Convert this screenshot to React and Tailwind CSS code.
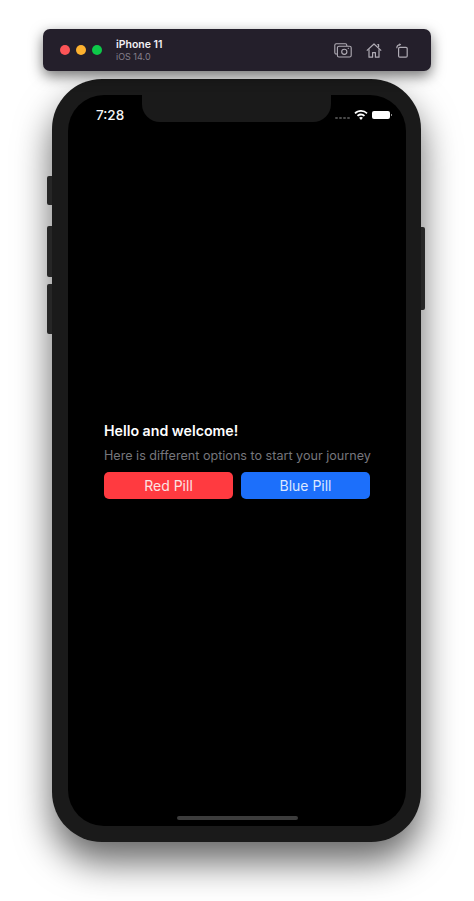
function CameraIcon() {
  return (
    <svg width="18" height="15" viewBox="0 0 18 15" fill="none" stroke="currentColor" strokeWidth="1.1">
      <path d="M3 11H2.2A1.4 1.4 0 0 1 .8 9.6V2.2A1.4 1.4 0 0 1 2.2.8h9.2a1.4 1.4 0 0 1 1.4 1.4V3" />
      <rect x="3.4" y="3.2" width="13.8" height="10.8" rx="1.6" />
      <circle cx="10.3" cy="8.8" r="2.6" />
      <path d="M13.8 5.4h1" />
    </svg>
  )
}

function HomeIcon() {
  return (
    <svg width="16" height="15" viewBox="0 0 16 15" fill="none" stroke="currentColor" strokeWidth="1.2" strokeLinejoin="round">
      <path d="M.8 7.6 8 1l7.2 6.6" />
      <path d="M3 6.2v8h3.6V9.6h2.8v4.6H13v-8" />
      <path d="M11.4 1.6h1.2v2.6" />
    </svg>
  )
}

function RotateIcon() {
  return (
    <svg width="12" height="15" viewBox="0 0 12 15" fill="none" stroke="currentColor" strokeWidth="1.2">
      <rect x="2.6" y="4.4" width="8.6" height="9.8" rx="1.2" />
      <path d="M.8 5.2C.8 3 2 1.8 4 1.6" />
      <path d="M3.4.2 5.2 1.6 3.4 3" fill="currentColor" stroke="none" />
    </svg>
  )
}

function WifiIcon() {
  return (
    <svg width="14" height="10" viewBox="0 0 14 10" fill="white">
      <path d="M7 0C4.4 0 2.1 1 .4 2.7l1.2 1.3A7.7 7.7 0 0 1 7 1.8c2.1 0 4 .8 5.4 2.2l1.2-1.3A9.6 9.6 0 0 0 7 0Z" />
      <path d="M7 3.6c-1.6 0-3 .6-4.1 1.7l1.2 1.3A4.2 4.2 0 0 1 7 5.4c1.1 0 2.2.5 2.9 1.2l1.2-1.3A5.8 5.8 0 0 0 7 3.6Z" />
      <path d="M7 7c-.8 0-1.4.3-1.9.8L7 10l1.9-2.2C8.4 7.3 7.8 7 7 7Z" />
    </svg>
  )
}

export default function App() {
  return (
    <div className="h-[901px] w-[474px] overflow-hidden bg-white pt-[29px] font-['Inter',sans-serif]">
      {/* simulator toolbar */}
      <div className="relative z-10 ml-[43px] flex h-[42px] w-[388px] items-center rounded-[7px] bg-[#241f2b] pl-[17px] pr-[23px] shadow-[0_5px_14px_rgba(0,0,0,0.55)]">
        <div className="flex gap-[6px]">
          <span className="h-[10px] w-[10px] rounded-full bg-[#fc5457]" />
          <span className="h-[10px] w-[10px] rounded-full bg-[#fdb12f]" />
          <span className="h-[10px] w-[10px] rounded-full bg-[#0dc949]" />
        </div>
        <div className="ml-[14px] flex flex-col">
          <span className="text-[10.5px] font-semibold leading-[12px] text-[#f2f0f4]">iPhone 11</span>
          <span className="text-[9px] leading-[11px] text-[#857f8c]">iOS 14.0</span>
        </div>
        <div className="ml-auto flex items-center gap-[14px] text-[#b0acb5]">
          <CameraIcon />
          <HomeIcon />
          <RotateIcon />
        </div>
      </div>

      {/* device */}
      <div className="relative ml-[52px] mt-[8px] h-[763px] w-[369px] rounded-[50px] bg-[#1a1a1a] py-[16px] pl-[16px] pr-[15px] shadow-[0_20px_36px_rgba(0,0,0,0.6)]">
        <span className="absolute left-[-5px] top-[97px] h-[29px] w-[5px] rounded-l-[2px] bg-[#262626]" />
        <span className="absolute left-[-5px] top-[147px] h-[51px] w-[5px] rounded-l-[2px] bg-[#262626]" />
        <span className="absolute left-[-5px] top-[205px] h-[50px] w-[5px] rounded-l-[2px] bg-[#262626]" />
        <span className="absolute right-[-4px] top-[148px] h-[83px] w-[4px] rounded-r-[2px] bg-[#262626]" />

        <div className="relative flex h-full w-full flex-col items-center justify-center rounded-[36px] bg-black">
          <div className="absolute left-[74px] top-0 h-[27px] w-[189px] rounded-b-[18px] bg-[#1a1a1a]" />
          <span className="absolute left-[28px] top-[12px] text-[13.5px] font-medium leading-[16px] text-[#f5f5f5]">7:28</span>

          <div className="absolute right-[16px] top-[15px] flex items-center gap-[3px]">
            <div className="mr-[1px] flex gap-[1px] self-end pb-[1px]">
              <span className="h-[2px] w-[3px] rounded-full bg-[#4a4a4a]" />
              <span className="h-[2px] w-[3px] rounded-full bg-[#4a4a4a]" />
              <span className="h-[2px] w-[3px] rounded-full bg-[#4a4a4a]" />
              <span className="h-[2px] w-[3px] rounded-full bg-[#4a4a4a]" />
            </div>
            <WifiIcon />
            <span className="relative ml-[1px] h-[8px] w-[18px] rounded-[2px] bg-white">
              <span className="absolute right-[-2px] top-[3px] h-[2px] w-[1px] bg-[#8a8a8a]" />
            </span>
          </div>

          <div className="flex w-[266px] flex-col">
            <h1 className="text-[14.2px] font-semibold leading-[18px] text-white">Hello and welcome!</h1>
            <p className="mt-[7px] whitespace-nowrap text-[12.6px] leading-[17px] text-[#76767c]">
              Here is different options to start your journey
            </p>
            <div className="mt-[8px] flex gap-[8px]">
              <button className="h-[27px] flex-1 rounded-[5px] bg-[#ff3a40] text-[14px] text-[#fbe3e4]">Red Pill</button>
              <button className="h-[27px] flex-1 rounded-[5px] bg-[#1c6ffb] text-[14px] text-[#dbe8ff]">Blue Pill</button>
            </div>
          </div>

          <div className="absolute bottom-[6px] left-[109px] h-[4px] w-[121px] rounded-full bg-[#3c3c3c]" />
        </div>
      </div>
    </div>
  )
}
